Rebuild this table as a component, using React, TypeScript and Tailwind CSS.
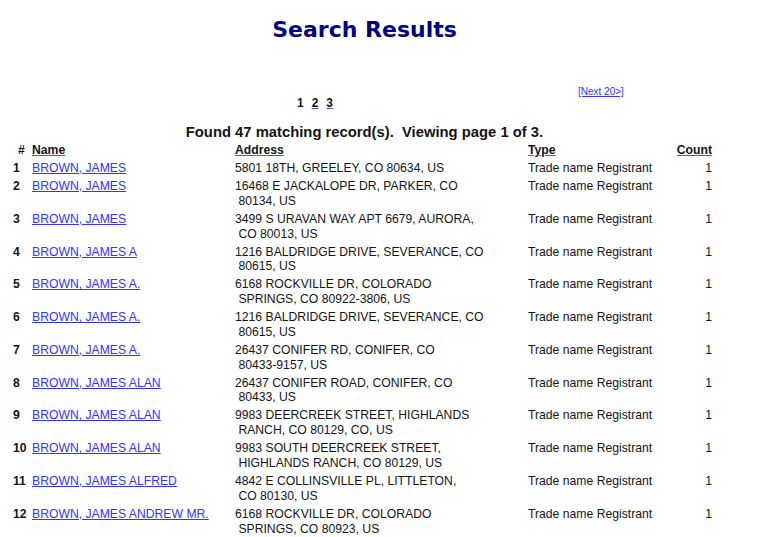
import React from 'react';

type Row = {
  name: string;
  address: string[];
  type: string;
  count: number;
};

const rows: Row[] = [
  { name: 'BROWN, JAMES', address: ['5801 18TH, GREELEY, CO 80634, US'], type: 'Trade name Registrant', count: 1 },
  { name: 'BROWN, JAMES', address: ['16468 E JACKALOPE DR, PARKER, CO', '80134, US'], type: 'Trade name Registrant', count: 1 },
  { name: 'BROWN, JAMES', address: ['3499 S URAVAN WAY APT 6679, AURORA,', 'CO 80013, US'], type: 'Trade name Registrant', count: 1 },
  { name: 'BROWN, JAMES A', address: ['1216 BALDRIDGE DRIVE, SEVERANCE, CO', '80615, US'], type: 'Trade name Registrant', count: 1 },
  { name: 'BROWN, JAMES A.', address: ['6168 ROCKVILLE DR, COLORADO', 'SPRINGS, CO 80922-3806, US'], type: 'Trade name Registrant', count: 1 },
  { name: 'BROWN, JAMES A.', address: ['1216 BALDRIDGE DRIVE, SEVERANCE, CO', '80615, US'], type: 'Trade name Registrant', count: 1 },
  { name: 'BROWN, JAMES A.', address: ['26437 CONIFER RD, CONIFER, CO', '80433-9157, US'], type: 'Trade name Registrant', count: 1 },
  { name: 'BROWN, JAMES ALAN', address: ['26437 CONIFER ROAD, CONIFER, CO', '80433, US'], type: 'Trade name Registrant', count: 1 },
  { name: 'BROWN, JAMES ALAN', address: ['9983 DEERCREEK STREET, HIGHLANDS', 'RANCH, CO 80129, CO, US'], type: 'Trade name Registrant', count: 1 },
  { name: 'BROWN, JAMES ALAN', address: ['9983 SOUTH DEERCREEK STREET,', 'HIGHLANDS RANCH, CO 80129, US'], type: 'Trade name Registrant', count: 1 },
  { name: 'BROWN, JAMES ALFRED', address: ['4842 E COLLINSVILLE PL, LITTLETON,', 'CO 80130, US'], type: 'Trade name Registrant', count: 1 },
  { name: 'BROWN, JAMES ANDREW MR.', address: ['6168 ROCKVILLE DR, COLORADO', 'SPRINGS, CO 80923, US'], type: 'Trade name Registrant', count: 1 },
];

const cols = 'grid grid-cols-[19px_203px_293px_147px_38px] ml-[12px]';

export default function App() {
  return (
    <div className="w-[768px] h-[537px] overflow-hidden bg-white text-[#141414] font-['Liberation_Sans',Arial,sans-serif]">
      <div className="w-[729px]">
        <h1 className="mt-[16px] h-[28px] leading-[28px] text-center text-[22px] font-bold text-[#000080] font-['DejaVu_Sans',Verdana,sans-serif]">
          Search Results
        </h1>

        {/* pager */}
        <div className="mt-[41px] flex h-[26px]">
          <div className="w-[630px] pt-[11px] text-center text-[12px] leading-[15px] font-bold">
            <span>1</span>
            <a href="#" className="ml-[8px] underline decoration-[#5555ff]">2</a>
            <a href="#" className="ml-[8px] underline decoration-[#5555ff]">3</a>
          </div>
          <a href="#" className="-ml-[52px] text-[10px] leading-[13px] text-[#3333ff] underline">
            [Next 20&gt;]
          </a>
        </div>

        <p className="mt-[12px] text-center text-[14.8px] leading-[18px] font-bold">
          Found 47 matching record(s).&nbsp; Viewing page 1 of 3.
        </p>

        <div className="text-[12.2px] leading-[14.8px]">
          <div className={`${cols} pt-[2px] pb-[1.2px] font-bold`}>
            <div className="text-center">#</div>
            <div className="pl-px"><a href="#" className="underline decoration-[#5555ff]">Name</a></div>
            <div className="pl-px"><a href="#" className="underline decoration-[#5555ff]">Address</a></div>
            <div className="pl-px"><a href="#" className="underline decoration-[#5555ff]">Type</a></div>
            <div className="text-right"><a href="#" className="underline decoration-[#5555ff]">Count</a></div>
          </div>
          {rows.map((r, i) => (
            <div key={i} className={`${cols} pt-[2px] pb-[1.2px]`}>
              <div className="pl-px font-bold">{i + 1}</div>
              <div className="pl-px">
                <a href="#" className="text-[#3333ff] underline">{r.name}</a>
              </div>
              <div className="pl-px">
                {r.address.map((line, j) => (
                  <div key={j}>{j > 0 ? '\u00a0' + line : line}</div>
                ))}
              </div>
              <div className="pl-px">{r.type}</div>
              <div className="text-right">{r.count}</div>
            </div>
          ))}
        </div>
      </div>
    </div>
  );
}
